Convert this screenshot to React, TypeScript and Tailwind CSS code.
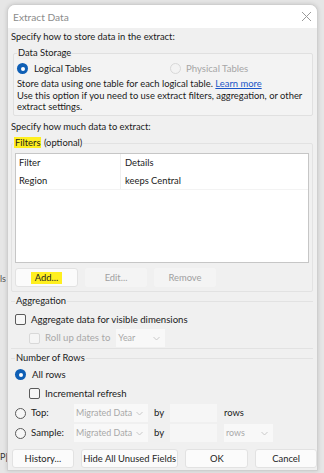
import React from "react";

const font = { fontFamily: 'Lato, "Noto Sans", sans-serif' };

function Radio({ checked, disabled }: { checked?: boolean; disabled?: boolean }) {
  if (checked)
    return (
      <span className="w-[11px] h-[11px] rounded-full bg-[#0f5fb5] flex items-center justify-center shrink-0">
        <span className="w-[4px] h-[4px] rounded-full bg-white" />
      </span>
    );
  return (
    <span
      className={
        "block w-[11px] h-[11px] rounded-full border shrink-0 " +
        (disabled ? "border-[#d8d8d8] bg-[#f3f3f3]" : "border-[#5a5a5a] bg-[#f7f7f7]")
      }
    />
  );
}

function Check({ disabled }: { disabled?: boolean }) {
  return (
    <span
      className={
        "block w-[11px] h-[11px] rounded-[2px] border shrink-0 " +
        (disabled ? "border-[#d8d8d8] bg-[#f5f5f5]" : "border-[#5a5a5a] bg-[#f7f7f7]")
      }
    />
  );
}

function Chevron() {
  return (
    <svg width="7" height="5" viewBox="0 0 7 5" className="shrink-0">
      <path d="M0.5 1 L3.5 4 L6.5 1" fill="none" stroke="#c4c4c4" strokeWidth="0.9" />
    </svg>
  );
}

function Select({ label, w }: { label: string; w: string }) {
  return (
    <div className={"h-[18px] bg-[#f8f8f8] flex items-center justify-between pl-[2px] pr-[5px] text-[8.9px] text-[#a8a8a8] whitespace-nowrap shrink-0 " + w}>
      <span>{label}</span>
      <Chevron />
    </div>
  );
}

function Btn({ children, w, disabled, hl }: { children: React.ReactNode; w: string; disabled?: boolean; hl?: boolean }) {
  return (
    <div
      className={
        "h-[19px] flex items-center justify-center rounded-[3px] whitespace-nowrap " +
        w +
        (disabled ? " bg-[#f4f4f4] text-[#a0a0a0]" : " bg-[#fbfbfb] border border-[#e2e2e2] text-[#1e1e1e]")
      }
    >
      {hl ? <span className="bg-[#ffef1f] px-[4px]">{children}</span> : children}
    </div>
  );
}

export default function App() {
  return (
    <div className="w-[324px] h-[473px] bg-[#e6e6e6] overflow-hidden relative text-[9.4px] leading-[12px] text-[#1b1b1b]" style={font}>
      <div className="absolute left-0 top-[273px] text-[#555] text-[9px]">ls</div>
      <div className="absolute left-0 top-[451px] text-[#333] text-[9px]">P|</div>
      <div className="ml-[7px] mt-[4px] w-[311px] h-[467px] rounded-t-[8px] border border-[#cfcfcf] bg-[#f0f0f0] flex flex-col relative overflow-hidden shadow-[0_0_4px_rgba(0,0,0,0.15)]">
        {/* title bar */}
        <div className="h-[23px] bg-white flex items-center justify-between pl-[5px] pr-[5px] shrink-0">
          <span className="text-[10.2px] text-[#8c8c8c]">Extract Data</span>
          <svg width="11" height="11" viewBox="0 0 11 11">
            <path d="M1 1 L10 10 M10 1 L1 10" stroke="#9a9a9a" strokeWidth="1" />
          </svg>
        </div>

        <div className="flex flex-col pl-[3px] pr-[4px]">
          <div className="h-[14px] mt-[2px] flex items-center">Specify how to store data in the extract:</div>

          {/* Data Storage */}
          <div className="ml-[2px] mt-[9px] h-[63px] border border-[#e0e0e0] rounded-[2px] bg-[#f3f3f3] relative pl-[3px] pr-[2px]">
            <div className="absolute -top-[7px] left-[3px] px-[1px] bg-[#f0f0f0]">Data Storage</div>
            <div className="mt-[8px] h-[13px] flex items-center">
              <div className="w-[153px] flex items-center">
                <Radio checked />
                <span className="ml-[6px] text-[9.6px]">Logical Tables</span>
              </div>
              <Radio disabled />
              <span className="ml-[5px] text-[9.6px] text-[#a6a6a6]">Physical Tables</span>
            </div>
            <div className="mt-[3px] leading-[11.5px] whitespace-nowrap">
              Store data using one table for each logical table.{" "}
              <span className="text-[#1a56c8] underline">Learn more</span>
              <br />
              Use this option if you need to use extract filters, aggregation, or other
              <br />
              extract settings.
            </div>
          </div>

          <div className="h-[14px] mt-[4px] flex items-center">Specify how much data to extract:</div>

          {/* Filters */}
          <div className="mt-[9px] h-[149px] border border-[#e2e2e2] rounded-[2px] relative px-[3px]">
            <div className="absolute -top-[7px] left-[1px] px-[1px] bg-[#f0f0f0]">
              <span className="bg-[#ffef1f] px-[1px]">Filters</span> (optional)
            </div>
            <div className="mt-[9px] h-[110px] bg-white border border-[#c6c6c6] flex flex-col">
              <div className="flex h-[18px] items-center">
                <div className="w-[105px] pl-[3px] h-full flex items-center border-r border-[#efefef]">Filter</div>
                <div className="pl-[4px]">Details</div>
              </div>
              <div className="flex h-[18px] items-center border-b border-[#f3f3f3]">
                <div className="w-[105px] pl-[3px] h-full flex items-center border-r border-[#efefef]">Region</div>
                <div className="pl-[4px]">keeps Central</div>
              </div>
            </div>
            <div className="mt-[5px] flex gap-[7px]">
              <Btn w="w-[63px]" hl>Add...</Btn>
              <Btn w="w-[62px]" disabled>Edit...</Btn>
              <Btn w="w-[62px]" disabled>Remove</Btn>
            </div>
          </div>

          {/* Aggregation */}
          <div className="mt-[9px] h-[48px] border-t border-b border-[#e2e2e2] relative px-[4px]">
            <div className="absolute -top-[7px] left-[4px] px-[1px] bg-[#f0f0f0]">Aggregation</div>
            <div className="mt-[11px] h-[13px] flex items-center">
              <Check />
              <span className="ml-[5px] text-[9.6px]">Aggregate data for visible dimensions</span>
            </div>
            <div className="mt-[3px] h-[18px] flex items-center pl-[14px]">
              <Check disabled />
              <span className="ml-[5px] text-[9.6px] text-[#a8a8a8]">Roll up dates to</span>
              <div className="ml-[6px]">
                <Select label="Year" w="w-[49px]" />
              </div>
            </div>
          </div>

          {/* Number of rows */}
          <div className="mt-[9px] border-t border-[#e2e2e2] relative px-[4px]">
            <div className="absolute -top-[7px] left-[4px] px-[1px] bg-[#f0f0f0]">Number of Rows</div>
            <div className="mt-[9px] h-[13px] flex items-center">
              <Radio checked />
              <span className="ml-[6px] text-[9.6px]">All rows</span>
            </div>
            <div className="mt-[6px] h-[13px] flex items-center pl-[14px]">
              <Check />
              <span className="ml-[5px] text-[9.6px]">Incremental refresh</span>
            </div>
            <div className="mt-[3px] h-[20px] flex items-center">
              <Radio />
              <span className="ml-[5px] w-[43px] text-[9.6px]">Top:</span>
              <Select label="Migrated Data" w="w-[74px]" />
              <span className="ml-[6px] w-[16px] text-[9.6px]">by</span>
              <div className="w-[47px] h-[18px] bg-[#f6f6f6]" />
              <span className="ml-[7px]">rows</span>
            </div>
            <div className="h-[20px] flex items-center">
              <Radio />
              <span className="ml-[5px] w-[43px] text-[9.6px]">Sample:</span>
              <Select label="Migrated Data" w="w-[74px]" />
              <span className="ml-[6px] w-[16px] text-[9.6px]">by</span>
              <div className="w-[47px] h-[18px] bg-[#f6f6f6]" />
              <div className="ml-[7px]">
                <Select label="rows" w="w-[49px]" />
              </div>
            </div>
          </div>
        </div>

        {/* footer */}
        <div className="mt-auto mb-[2px] flex gap-[7px] pl-[4px]">
          <Btn w="w-[62px]">History...</Btn>
          <Btn w="w-[98px]">Hide All Unused Fields</Btn>
          <Btn w="w-[63px]">OK</Btn>
          <Btn w="w-[62px]">Cancel</Btn>
        </div>
      </div>
    </div>
  );
}
